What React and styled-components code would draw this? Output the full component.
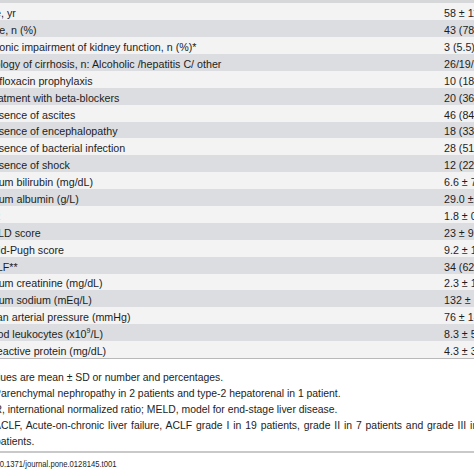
import React from "react";
import styled, { createGlobalStyle } from "styled-components";

const Global = createGlobalStyle`
  html, body {
    margin: 0;
    padding: 0;
    background: #ffffff;
    overflow: hidden;
  }
  body {
    width: 474px;
    height: 474px;
    font-family: "Liberation Sans", Arial, Helvetica, sans-serif;
    color: #1d1d1d;
  }
`;

const Page = styled.div`
  width: 474px;
  height: 474px;
  overflow: hidden;
  display: flex;
  flex-direction: column;
`;

const Table = styled.div`
  display: flex;
  flex-direction: column;
  border-bottom: 1px solid #b9b9b9;
`;

const HeaderEdge = styled.div`
  height: 3.3px;
  background: #d6d7d9;
`;

const Row = styled.div`
  display: grid;
  grid-template-columns: 444px 1fr;
  height: 16.9px;
  box-sizing: border-box;
  padding-top: 3.9px;
  line-height: 13px;
  font-size: 10.7px;
  white-space: nowrap;
  background: ${(p) => (p.$shaded ? "#dcdde0" : "#f3f3f4")};
`;

const Label = styled.span`
  margin-left: -18px;
`;

const Value = styled.span``;

const Sup = styled.sup`
  font-size: 7px;
  line-height: 0;
`;

const Notes = styled.div`
  display: flex;
  flex-direction: column;
  padding: 10.9px 0 1.4px;
  border-bottom: 2px solid #c9c9c9;
`;

const NoteLine = styled.div`
  font-size: 10.4px;
  line-height: 16px;
  white-space: nowrap;
  margin-left: ${(p) => -p.$shift}px;
  word-spacing: ${(p) => (p.$justify ? "1px" : "0")};
`;

const Doi = styled.div`
  padding-top: 4px;
  font-size: 9.2px;
  line-height: 14px;
  white-space: nowrap;
  margin-left: ${(p) => -p.$shift}px;
  transform: scaleX(0.835);
  transform-origin: left center;
`;

const rows = [
  ["Age, yr", "58 ± 11"],
  ["Male, n (%)", "43 (78)"],
  ["Chronic impairment of kidney function, n (%)*", "3 (5.5)"],
  ["Etiology of cirrhosis, n: Alcoholic /hepatitis C/ other", "26/19/10"],
  ["Norfloxacin prophylaxis", "10 (18)"],
  ["Treatment with beta-blockers", "20 (36)"],
  ["Presence of ascites", "46 (84)"],
  ["Presence of encephalopathy", "18 (33)"],
  ["Presence of bacterial infection", "28 (51)"],
  ["Presence of shock", "12 (22)"],
  ["Serum bilirubin (mg/dL)", "6.6 ± 7.5"],
  ["Serum albumin (g/L)", "29.0 ± 5.9"],
  ["INR", "1.8 ± 0.6"],
  ["MELD score", "23 ± 9"],
  ["Child-Pugh score", "9.2 ± 1.9"],
  ["ACLF**", "34 (62)"],
  ["Serum creatinine (mg/dL)", "2.3 ± 1.8"],
  ["Serum sodium (mEq/L)", "132 ± 6"],
  ["Mean arterial pressure (mmHg)", "76 ± 14"],
  [
    <>
      Blood leukocytes (x10<Sup>9</Sup>/L)
    </>,
    "8.3 ± 5.2",
  ],
  ["C-reactive protein (mg/dL)", "4.3 ± 3.1"],
];

const notes = [
  { text: "Values are mean ± SD or number and percentages.", shift: 14 },
  { text: "*Parenchymal nephropathy in 2 patients and type-2 hepatorenal in 1 patient.", shift: 10 },
  { text: "INR, international normalized ratio; MELD, model for end-stage liver disease.", shift: 16 },
  {
    text: "**ACLF, Acute-on-chronic liver failure, ACLF grade I in 19 patients, grade II in 7 patients and grade III in 8",
    shift: 14,
    justify: true,
  },
  { text: "patients.", shift: 5 },
];

export default function App() {
  return (
    <>
      <Global />
      <Page>
        <Table>
          <HeaderEdge />
          {rows.map(([label, value], i) => (
            <Row key={i} $shaded={i % 2 === 1}>
              <Label>{label}</Label>
              <Value>{value}</Value>
            </Row>
          ))}
        </Table>
        <Notes>
          {notes.map((n, i) => (
            <NoteLine key={i} $shift={n.shift} $justify={n.justify}>
              {n.text}
            </NoteLine>
          ))}
        </Notes>
        <Doi $shift={17}>doi:10.1371/journal.pone.0128145.t001</Doi>
      </Page>
    </>
  );
}
